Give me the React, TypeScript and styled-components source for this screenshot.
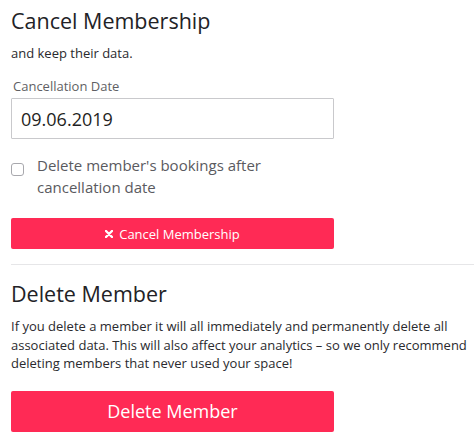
import React from 'react';
import styled, { createGlobalStyle } from 'styled-components';

const GlobalStyle = createGlobalStyle`
	body {
		margin: 0;
		background: #ffffff;
		font-family: 'Open Sans', 'Liberation Sans', sans-serif;
	}
`;

const Page = styled.div`
	width: 474px;
	height: 444px;
	overflow: hidden;
	box-sizing: border-box;
	padding-top: 6px;
`;

const Section = styled.section<{ $gap?: number }>`
	padding-left: 11px;
	margin-top: ${(p) => p.$gap ?? 0}px;
	display: flex;
	flex-direction: column;
`;

const Title = styled.h2`
	margin: 0;
	font-size: 21.5px;
	font-weight: 400;
	line-height: 30px;
	color: #222226;
`;

const Lead = styled.p`
	margin: 8px 0 0;
	font-size: 13px;
	line-height: 18px;
	color: #2a2a2e;
`;

const FieldLabel = styled.label`
	margin: 16px 0 0 2px;
	font-size: 13px;
	line-height: 17px;
	color: #5f5f64;
`;

const DateInput = styled.input`
	margin-top: 3px;
	width: 323px;
	height: 41px;
	box-sizing: border-box;
	border: 1px solid #c9c9cc;
	border-radius: 1px;
	padding: 0 9px;
	font-family: inherit;
	font-size: 18px;
	color: #1f1f23;
	outline: none;
`;

const CheckRow = styled.div`
	display: flex;
	align-items: flex-start;
	gap: 13px;
	margin-top: 15px;
`;

const Box = styled.span`
	width: 11px;
	height: 11px;
	margin-top: 9px;
	border: 1px solid #a8a8ad;
	border-radius: 3px;
	flex-shrink: 0;
`;

const CheckText = styled.span`
	font-size: 15px;
	line-height: 22px;
	color: #5a5a60;
	width: 250px;
`;

const ButtonSlot = styled.div<{ $gap: number }>`
	margin-top: ${(p) => p.$gap}px;
`;

const RedButton = styled.button<{ $big?: boolean }>`
	width: 323px;
	height: ${(p) => (p.$big ? '41px' : '31px')};
	border: none;
	border-radius: 2px;
	background: #ff2a55;
	color: #ffffff;
	font-family: inherit;
	font-size: ${(p) => (p.$big ? '18px' : '13px')};
	display: flex;
	align-items: center;
	justify-content: center;
	gap: 6px;
	padding: 0;
	cursor: pointer;
`;

const Divider = styled.hr`
	margin: 15px 0 0 11px;
	border: none;
	border-top: 1px solid #e6e6e8;
`;

const Paragraph = styled.p`
	margin: 8px 0 0;
	font-size: 13px;
	line-height: 18.5px;
	color: #2a2a2e;
	width: 463px;
`;

const CrossIcon = () => (
	<svg width="8" height="8" viewBox="0 0 8 8">
		<path d="M1 1 L7 7 M7 1 L1 7" stroke="#fff" strokeWidth="2.4" strokeLinecap="round" />
	</svg>
);

export default function App() {
	return (
		<Page>
			<GlobalStyle />
			<Section>
				<Title>Cancel Membership</Title>
				<Lead>and keep their data.</Lead>
				<FieldLabel>Cancellation Date</FieldLabel>
				<DateInput defaultValue="09.06.2019" />
				<CheckRow>
					<Box />
					<CheckText>Delete member's bookings after cancellation date</CheckText>
				</CheckRow>
				<ButtonSlot $gap={20}>
					<RedButton>
						<CrossIcon />
						Cancel Membership
					</RedButton>
				</ButtonSlot>
			</Section>
			<Divider />
			<Section $gap={14}>
				<Title>Delete Member</Title>
				<Paragraph>
					If you delete a member it will all immediately and permanently delete all associated data. This
					will also affect your analytics – so we only recommend deleting members that never used your
					space!
				</Paragraph>
				<ButtonSlot $gap={18}>
					<RedButton $big>Delete Member</RedButton>
				</ButtonSlot>
			</Section>
		</Page>
	);
}
